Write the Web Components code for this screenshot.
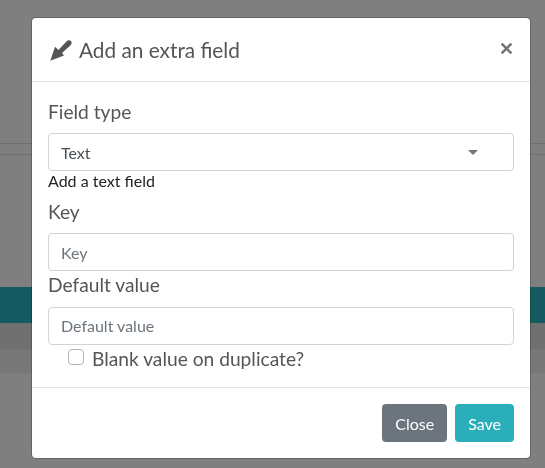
<!DOCTYPE html>
<html>
<head>
<meta charset="utf-8">
<title>Add an extra field</title>
<style>
  html, body { margin: 0; height: 100%; }
  body { overflow: hidden; font-family: Lato, sans-serif; }
</style>
</head>
<body>
<page-backdrop>
  <extra-field-modal heading="Add an extra field">
    <form-field label="Field type">
      <select-box value="Text"></select-box>
      <div slot="help">Add a text field</div>
    </form-field>
    <form-field label="Key"><text-box placeholder="Key"></text-box></form-field>
    <form-field label="Default value"><text-box placeholder="Default value"></text-box></form-field>
    <check-row label="Blank value on duplicate?"></check-row>
    <modal-button slot="footer" kind="close">Close</modal-button>
    <modal-button slot="footer" kind="save">Save</modal-button>
  </extra-field-modal>
</page-backdrop>

<script>
class PageBackdrop extends HTMLElement {
  constructor() {
    super();
    this.attachShadow({ mode: 'open' }).innerHTML = `
      <style>
        :host { display: block; position: relative; width: 545px; height: 468px; overflow: hidden; background: #7f7f7f; }
        .strip { display: flex; flex-direction: column; position: absolute; inset: 0; }
        .gap1 { height: 143px; }
        .line { height: 1px; background: #6f6f6f; }
        .gap2 { height: 10px; }
        .gap3 { height: 132px; }
        .teal { height: 36px; background: #155a60; }
        .gap4 { height: 25px; background: #707070; }
        .gap5 { height: 24px; background: #777; }
        .center { position: relative; display: flex; justify-content: flex-start; padding: 18px 0 0 32px; }
      </style>
      <div class="strip">
        <div class="gap1"></div><div class="line"></div><div class="gap2"></div><div class="line"></div>
        <div class="gap3"></div><div class="teal"></div><div class="gap4"></div><div class="line"></div>
        <div class="gap5"></div>
      </div>
      <div class="center"><slot></slot></div>`;
  }
}

class ExtraFieldModal extends HTMLElement {
  constructor() {
    super();
    this.attachShadow({ mode: 'open' }).innerHTML = `
      <style>
        :host { display: block; width: 498px; height: 440px; background: #fff; border-radius: 4px; box-sizing: border-box;
          box-shadow: 0 0 0 1px rgba(0,0,0,.2); color: #555; font-family: Lato, sans-serif; will-change: transform; }
        header { display: flex; align-items: center; height: 63px; padding: 0 18px; border-bottom: 1px solid #e4e4e4; }
        svg.icon { width: 23px; height: 23px; margin-right: 6px; flex: none; }
        h5 { margin: 0; font-size: 20.8px; font-weight: 400; flex: 1; line-height: 25px; color: #555; }
        svg.x { width: 11px; height: 11px; margin-top: -3px; }
        main { padding: 16px 16px 0; height: 306px; box-sizing: border-box; border-bottom: 1px solid #e4e4e4; }
        footer { display: flex; justify-content: flex-end; gap: 8px; padding: 16px 16px 0 0; }
      </style>
      <header>
        <svg class="icon" viewBox="0 0 23 23"><path fill="#555" d="M0.3 22.8 L5 8.7 L8.5 12 L16 4 C17.3 2.3 19.6 1.6 21 3 C22.3 4.4 21.5 6.5 20 7.8 L12 15 L14 17.5 Z"/></svg>
        <h5></h5>
        <svg class="x" viewBox="0 0 11 11"><path d="M0.6 0.6 L10.4 10.4 M10.4 0.6 L0.6 10.4" stroke="#737373" stroke-width="2.5" fill="none"/></svg>
      </header>
      <main><slot></slot></main>
      <footer><slot name="footer"></slot></footer>`;
    this.shadowRoot.querySelector('h5').textContent = this.getAttribute('heading');
  }
}

class FormField extends HTMLElement {
  constructor() {
    super();
    this.attachShadow({ mode: 'open' }).innerHTML = `
      <style>
        :host { display: block; }
        label { display: block; font-size: 19.2px; line-height: 28.8px; color: #555; margin-bottom: 6.4px; }
        .help { font-size: 16px; line-height: 20px; color: #212529; }
        :host([label="Field type"]) .help { margin-bottom: 7px; }
      </style>
      <label></label>
      <slot></slot>
      <div class="help"><slot name="help"></slot></div>`;
    this.shadowRoot.querySelector('label').textContent = this.getAttribute('label');
  }
}

class SelectBox extends HTMLElement {
  constructor() {
    super();
    this.attachShadow({ mode: 'open' }).innerHTML = `
      <style>
        :host { display: flex; align-items: center; justify-content: space-between; height: 38px; box-sizing: border-box;
          border: 1px solid #ced4da; border-radius: 4px; padding: 0 35px 0 12px; font-size: 16px; color: #495057; background: #fff; }
        i { width: 0; height: 0; border: 5px solid transparent; border-top: 5px solid #777; border-bottom: 0; }
      </style>
      <span></span><i></i>`;
    this.shadowRoot.querySelector('span').textContent = this.getAttribute('value');
  }
}

class TextBox extends HTMLElement {
  constructor() {
    super();
    this.attachShadow({ mode: 'open' }).innerHTML = `
      <style>
        :host { display: flex; align-items: center; height: 38px; box-sizing: border-box; border: 1px solid #ced4da;
          border-radius: 4px; padding: 0 12px; font-size: 16px; color: #6c757d; background: #fff; }
      </style>
      <span></span>`;
    this.shadowRoot.querySelector('span').textContent = this.getAttribute('placeholder');
  }
}

class CheckRow extends HTMLElement {
  constructor() {
    super();
    this.attachShadow({ mode: 'open' }).innerHTML = `
      <style>
        :host { display: flex; align-items: center; padding-left: 20px; height: 28.8px; font-size: 19.2px; color: #555; }
        i { width: 14px; height: 14px; border: 1px solid #adb5bd; border-radius: 4px; margin: 0 8px 4px 0; background: #fff; }
      </style>
      <i></i><span></span>`;
    this.shadowRoot.querySelector('span').textContent = this.getAttribute('label');
  }
}

class ModalButton extends HTMLElement {
  constructor() {
    super();
    this.attachShadow({ mode: 'open' }).innerHTML = `
      <style>
        :host { display: flex; align-items: center; height: 38px; padding: 0 13px; border-radius: 4px; font-size: 16px; color: #fff; background: #6c757d; }
        :host([kind="save"]) { background: #2aaeb9; }
      </style>
      <slot></slot>`;
  }
}

customElements.define('page-backdrop', PageBackdrop);
customElements.define('extra-field-modal', ExtraFieldModal);
customElements.define('form-field', FormField);
customElements.define('select-box', SelectBox);
customElements.define('text-box', TextBox);
customElements.define('check-row', CheckRow);
customElements.define('modal-button', ModalButton);
</script>
</body>
</html>
